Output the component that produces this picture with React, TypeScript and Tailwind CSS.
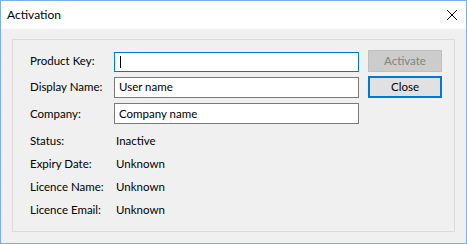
export default function App() {
  const font = { fontFamily: 'Lato, "Noto Sans", sans-serif' };
  return (
    <div
      className="w-[467px] h-[244px] border border-[#7aafe9] flex flex-col bg-[#f0f0f0] text-[11.5px] text-black"
      style={font}
    >
      <div className="h-[28px] bg-white flex items-center justify-between pl-[6px] pr-[7px]">
        <span className="text-[12px] leading-none">Activation</span>
        <svg width="12" height="12" viewBox="0 0 12 12" className="mr-[1px]">
          <path d="M1 1 L11 11 M11 1 L1 11" stroke="#000" strokeWidth="1" />
        </svg>
      </div>
      <div className="flex-1 pt-[10px] pl-[11px] pr-[11px] pb-[11px]">
        <div className="h-full border border-[#dcdcdc] pl-[17px] pt-[10px]">
          <div className="flex flex-col">
            <div className="flex items-center h-[22px]">
              <span className="w-[84px]">Product Key:</span>
              <div className="w-[245px] h-[20px] border border-[#0078d7] bg-white flex items-center pl-[5px] mt-[2px]">
                <span className="w-[1px] h-[12px] bg-black"></span>
              </div>
              <div className="ml-[9px] w-[74px] h-[22px] border border-[#bfbfbf] bg-[#cccccc] text-[#838383] flex items-center justify-center">
                Activate
              </div>
            </div>
            <div className="flex items-center h-[22px] mt-[4px]">
              <span className="w-[84px]">Display Name:</span>
              <div className="w-[245px] h-[21px] border border-[#7a7a7a] bg-white flex items-center pl-[4px]">
                User name
              </div>
              <div className="ml-[9px] w-[74px] h-[22px] border-2 border-[#0078d7] bg-[#e1e1e1] flex items-center justify-center">
                Close
              </div>
            </div>
            <div className="flex items-center h-[21px] mt-[5px]">
              <span className="w-[84px]">Company:</span>
              <div className="w-[245px] h-[21px] border border-[#7a7a7a] bg-white flex items-center pl-[4px]">
                Company name
              </div>
            </div>
            <div className="mt-[5px] flex flex-col">
              {[
                ["Status:", "Inactive"],
                ["Expiry Date:", "Unknown"],
                ["Licence Name:", "Unknown"],
                ["Licence Email:", "Unknown"],
              ].map(([k, v]) => (
                <div key={k} className="flex items-center h-[23px]">
                  <span className="w-[86px]">{k}</span>
                  <span>{v}</span>
                </div>
              ))}
            </div>
          </div>
        </div>
      </div>
    </div>
  );
}
